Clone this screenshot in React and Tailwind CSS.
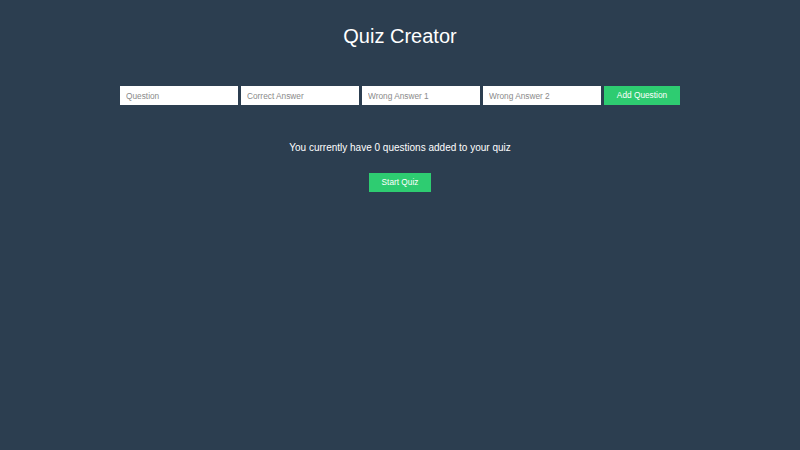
import { useState } from "react"

export default function App() {
  const [questions, setQuestions] = useState([])
  const [form, setForm] = useState({ question: "", correct: "", wrong1: "", wrong2: "" })

  const update = (key) => (e) => setForm({ ...form, [key]: e.target.value })

  const addQuestion = () => {
    if (!form.question) return
    setQuestions([...questions, form])
    setForm({ question: "", correct: "", wrong1: "", wrong2: "" })
  }

  const inputClass =
    "w-[118px] h-[19px] bg-white px-[6px] text-[8.3px] text-gray-700 placeholder:text-[#8a8a8a] outline-none"

  return (
    <div className="min-h-[450px] w-full bg-[#2c3e50] font-['Liberation_Sans',Arial,sans-serif] text-white">
      <h1 className="pt-[25px] text-center text-[20px] leading-[23px]">Quiz Creator</h1>

      {/* form row */}
      <div className="mt-[38px] flex justify-center gap-[3px]">
        <input className={inputClass} placeholder="Question" value={form.question} onChange={update("question")} />
        <input className={inputClass} placeholder="Correct Answer" value={form.correct} onChange={update("correct")} />
        <input className={inputClass} placeholder="Wrong Answer 1" value={form.wrong1} onChange={update("wrong1")} />
        <input className={inputClass} placeholder="Wrong Answer 2" value={form.wrong2} onChange={update("wrong2")} />
        <button
          onClick={addQuestion}
          className="h-[19px] w-[76px] bg-[#2ecc71] text-[8.3px] text-white"
        >
          Add Question
        </button>
      </div>

      <p className="mt-[37px] text-center text-[10px] leading-[12px]">
        You currently have {questions.length} questions added to your quiz
      </p>

      <div className="mt-[19px] flex justify-center">
        <button className="h-[19px] w-[62px] bg-[#2ecc71] text-[8.3px] text-white">Start Quiz</button>
      </div>
    </div>
  )
}
